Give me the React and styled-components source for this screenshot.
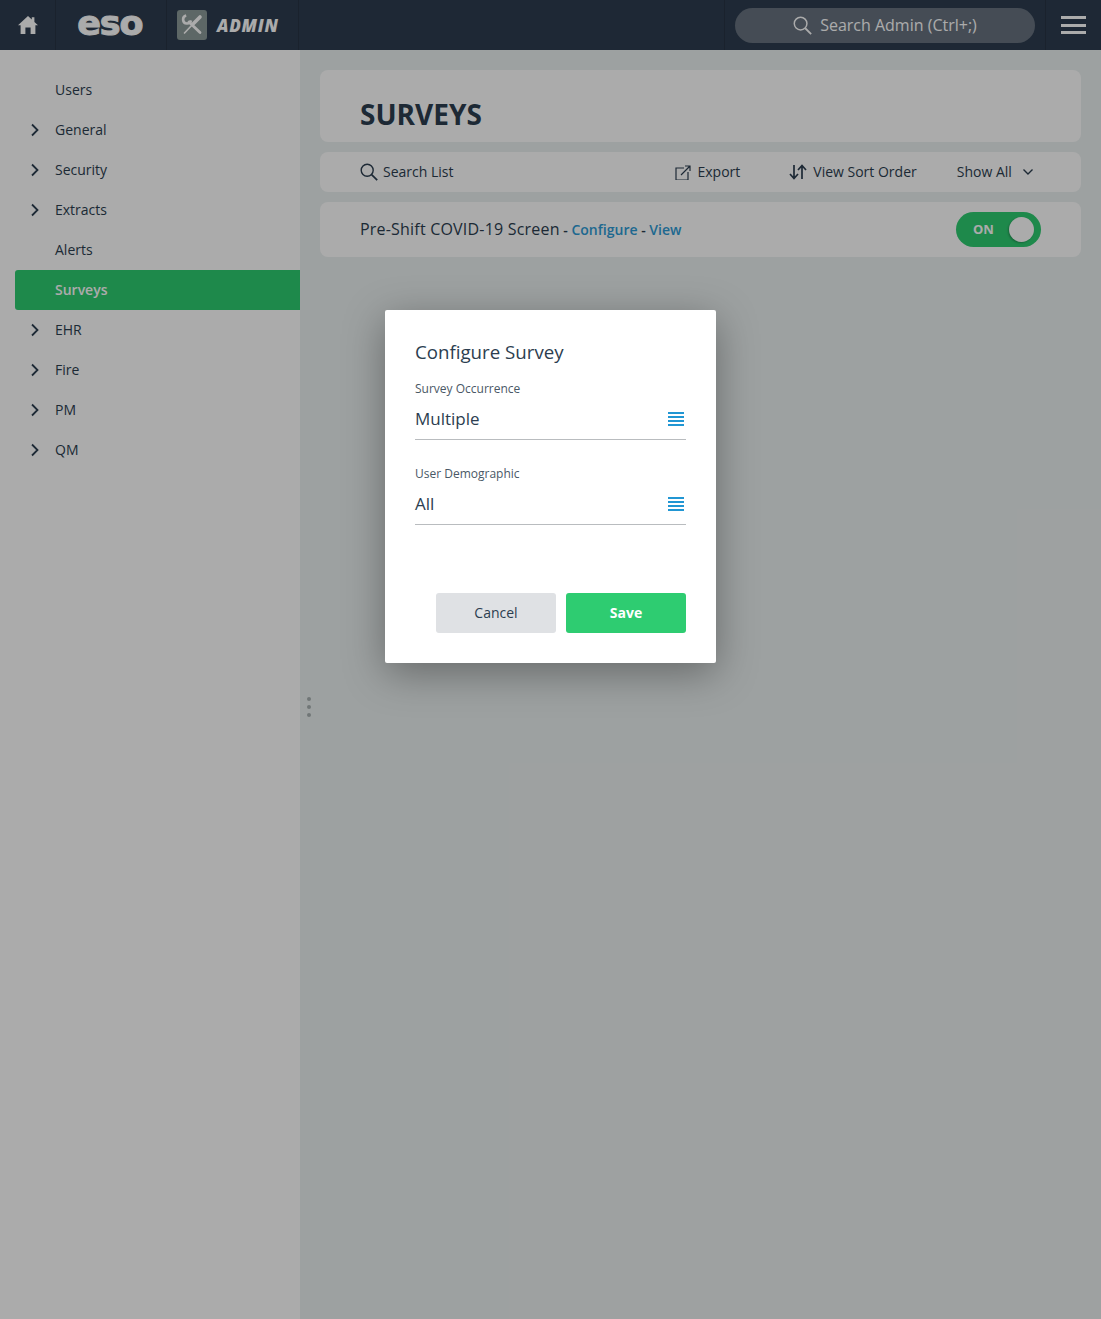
import React from 'react';
import styled, { createGlobalStyle } from 'styled-components';

const GlobalStyle = createGlobalStyle`
  html, body { margin: 0; padding: 0; height: 100%; }
  #root { height: 100%; }
  body { font-family: "Open Sans", "Noto Sans", sans-serif; color: #2c3e50; }
  * { box-sizing: border-box; }
`;

const Page = styled.div`
  position: relative;
  height: 100vh;
  display: flex;
  flex-direction: column;
  background: #ebf0f0;
  overflow: hidden;
`;

const TopBar = styled.header`
  height: 50px;
  flex: none;
  display: flex;
  background: #2e3d50;
`;

const BarCell = styled.div`
  width: ${({ $width }) => $width}px;
  flex: ${({ $grow }) => ($grow ? 1 : 'none')};
  display: flex;
  align-items: center;
  justify-content: ${({ $start }) => ($start ? 'flex-start' : 'center')};
  gap: 10px;
  padding-left: ${({ $start }) => ($start ? '10px' : 0)};
  border-right: ${({ $last }) => ($last ? '0' : '1px solid #273443')};
  color: #fff;
`;

const Logo = styled.span`
  font-family: "DejaVu Sans", sans-serif;
  font-weight: 700;
  font-size: 33px;
  line-height: 1;
  letter-spacing: -1px;
  color: #fff;
  -webkit-text-stroke: 1px #fff;
  margin: -4px 2px 0 0;
  transform: scaleX(1.06);
`;

const ToolTile = styled.span`
  width: 30px;
  height: 30px;
  border-radius: 3px;
  background: #8b9a98;
  display: flex;
  align-items: center;
  justify-content: center;
`;

const AdminLabel = styled.span`
  font-weight: 800;
  font-style: italic;
  font-size: 17px;
  letter-spacing: 0.7px;
  color: #fff;
`;

const SearchPill = styled.div`
  width: 300px;
  height: 35px;
  border-radius: 18px;
  background: #67727f;
  display: flex;
  align-items: center;
  justify-content: center;
  gap: 8px;
  color: #fff;
  font-size: 16px;
`;

const Burger = styled.div`
  width: 25px;
  height: 18px;
  display: flex;
  flex-direction: column;
  justify-content: space-between;
  span { display: block; height: 3px; background: #fff; }
`;

const Body = styled.div`
  flex: 1;
  display: flex;
  min-height: 0;
`;

const Sidebar = styled.nav`
  width: 300px;
  flex: none;
  background: #fff;
  padding: 20px 0 0 15px;
`;

const NavRow = styled.div`
  height: 40px;
  display: flex;
  align-items: center;
  padding-left: ${({ $arrow }) => ($arrow ? '15px' : '40px')};
  padding-bottom: 2px;
  font-size: 14px;
  font-weight: ${({ $active }) => ($active ? 600 : 400)};
  color: ${({ $active }) => ($active ? '#fff' : '#2c3e50')};
  background: ${({ $active }) => ($active ? '#2ecc71' : 'transparent')};
  border-radius: 3px 0 0 3px;
`;

const NavArrow = styled.svg`
  width: 10px;
  height: 14px;
  margin: 2px 15px 0 0;
`;

const Main = styled.main`
  flex: 1;
  padding: 20px;
  display: flex;
  flex-direction: column;
  gap: 10px;
`;

const Card = styled.section`
  background: #fff;
  border-radius: 8px;
  display: flex;
  align-items: center;
  padding: 0 40px;
`;

const TitleCard = styled(Card)`
  height: 72px;
  padding-top: 15px;
`;

const Title = styled.h1`
  margin: 0;
  font-size: 28px;
  font-weight: 700;
  line-height: 1;
  color: #2c3e50;
`;

const ToolbarCard = styled(Card)`
  height: 40px;
  font-size: 14px;
  color: #2c3e50;
`;

const ToolItem = styled.div`
  display: flex;
  align-items: center;
  gap: ${({ $gap }) => $gap || 5}px;
  margin-left: ${({ $left }) => $left || 0}px;
  padding-bottom: 2px;

  svg { margin-top: 2px; }
`;

const ListCard = styled(Card)`
  height: 55px;
  justify-content: space-between;
`;

const RowText = styled.div`
  font-size: 14px;
  font-weight: 600;
  padding-bottom: 2px;
`;

const RowName = styled.span`
  font-size: 16px;
  font-weight: 500;
  letter-spacing: 0.2px;
`;

const RowLink = styled.a`
  color: #2e9bd6;
`;

const Toggle = styled.div`
  width: 85px;
  height: 35px;
  border-radius: 18px;
  background: #2ecc71;
  margin-left: auto;
  position: relative;
  display: flex;
  align-items: center;
  padding: 0 0 2px 17px;
  color: #fff;
  font-size: 13px;
  font-weight: 700;
`;

const Knob = styled.span`
  position: absolute;
  right: 7px;
  top: 5px;
  width: 25px;
  height: 25px;
  border-radius: 50%;
  background: #fff;
  box-shadow: -1px 1px 2px rgba(0, 0, 0, 0.25);
`;

const Splitter = styled.div`
  position: absolute;
  left: 307px;
  top: 697px;
  display: flex;
  flex-direction: column;
  gap: 4px;
  span { width: 4px; height: 4px; border-radius: 50%; background: #a8b1b2; }
`;

const Overlay = styled.div`
  position: absolute;
  inset: 0;
  background: rgba(0, 0, 0, 0.33);
  display: flex;
  justify-content: center;
  align-items: flex-start;
  padding-top: 310px;
`;

const Modal = styled.div`
  width: 331px;
  height: 353px;
  background: #fff;
  border-radius: 2px;
  padding: 30px;
  display: flex;
  flex-direction: column;
  box-shadow: 0 10px 40px rgba(0, 0, 0, 0.35);
`;

const ModalTitle = styled.h2`
  margin: 0 0 16px;
  font-size: 18.7px;
  font-weight: 400;
  line-height: 24px;
  color: #2c3e50;
`;

const Field = styled.div`
  height: 85px;
`;

const FieldLabel = styled.div`
  font-size: 12px;
  line-height: 17px;
  color: #4a5866;
`;

const FieldValue = styled.div`
  margin-top: 6px;
  height: 37px;
  border-bottom: 1px solid #b9bcbf;
  display: flex;
  align-items: center;
  justify-content: space-between;
  padding: 0 2px 5px 0;
  font-size: 17px;
  color: #2c3e50;
`;

const ListIcon = styled.span`
  width: 16px;
  height: 14px;
  display: flex;
  flex-direction: column;
  justify-content: space-between;
  span { display: block; height: 2px; background: #2196d3; }
`;

const Actions = styled.div`
  margin-top: auto;
  display: flex;
  justify-content: flex-end;
  gap: 10px;
`;

const Button = styled.button`
  width: 120px;
  height: 40px;
  border: 0;
  border-radius: 3px;
  padding: 0 0 2px;
  font-family: inherit;
  font-size: 14px;
  font-weight: ${({ $primary }) => ($primary ? 700 : 400)};
  color: ${({ $primary }) => ($primary ? '#fff' : '#2c3e50')};
  background: ${({ $primary }) => ($primary ? '#2ecc71' : '#dfe1e4')};
`;

const SearchGlass = ({ size = 18, color = 'currentColor' }) => (
  <svg width={size} height={size} viewBox="0 0 18 18" fill="none" stroke={color} strokeWidth="1.4">
    <circle cx="7.2" cy="7.2" r="6" />
    <path d="M11.6 11.6 L17.2 17.2" strokeWidth="1.7" />
  </svg>
);

const HomeIcon = () => (
  <svg width="20" height="18" viewBox="0 0 20 18" fill="#fff">
    <path d="M10 0 L13.8 3.5 L13.8 1.2 L16.4 1.2 L16.4 5.9 L20 9.2 L17.4 9.2 L17.4 18 L12.6 18 L12.6 11.5 L7.4 11.5 L7.4 18 L2.6 18 L2.6 9.2 L0 9.2 Z" />
  </svg>
);

const ToolsIcon = () => (
  <svg width="24" height="24" viewBox="0 0 24 24" fill="none" stroke="#fff" strokeLinecap="round">
    <path d="M9 9 L20 19.5" strokeWidth="2.8" />
    <path d="M6.2 2.6 A4 4 0 1 0 11 7.4" strokeWidth="2.6" strokeLinecap="butt" />
    <path d="M20 4 L13.5 10.5" strokeWidth="3.6" />
    <path d="M13.5 10.5 L4.5 20" strokeWidth="1.7" />
  </svg>
);

const ExportIcon = () => (
  <svg width="16" height="16" viewBox="0 -1 16 16" fill="none" stroke="#2c3e50" strokeWidth="1.2">
    <path d="M9 3 H1 V15 H13 V7" />
    <path d="M6 10 L15 1 M10 1 H15 V6" />
  </svg>
);

const SortIcon = () => (
  <svg width="18" height="16" viewBox="0 0 18 16" fill="none" stroke="#2c3e50" strokeWidth="1.7">
    <path d="M5 1 V14.5 M1 10 L5 14.5 L9 10" />
    <path d="M13 15 V1.5 M9 6 L13 1.5 L17 6" />
  </svg>
);

const ChevronDown = () => (
  <svg width="10" height="6" viewBox="0 0 10 6" fill="none" stroke="#2c3e50" strokeWidth="1.4">
    <path d="M0.5 0.5 L5 5 L9.5 0.5" />
  </svg>
);

const navItems = [
  { label: 'Users' },
  { label: 'General', arrow: true },
  { label: 'Security', arrow: true },
  { label: 'Extracts', arrow: true },
  { label: 'Alerts' },
  { label: 'Surveys', active: true },
  { label: 'EHR', arrow: true },
  { label: 'Fire', arrow: true },
  { label: 'PM', arrow: true },
  { label: 'QM', arrow: true },
];

const App = () => (
  <Page>
    <GlobalStyle />
    <TopBar>
      <BarCell $width={56}><HomeIcon /></BarCell>
      <BarCell $width={111}><Logo>eso</Logo></BarCell>
      <BarCell $width={132} $start>
        <ToolTile><ToolsIcon /></ToolTile>
        <AdminLabel>ADMIN</AdminLabel>
      </BarCell>
      <BarCell $grow />
      <BarCell $width={321}>
        <SearchPill><SearchGlass size={19} color="#fff" />Search Admin (Ctrl+;)</SearchPill>
      </BarCell>
      <BarCell $width={55} $last>
        <Burger><span /><span /><span /></Burger>
      </BarCell>
    </TopBar>
    <Body>
      <Sidebar>
        {navItems.map(({ label, arrow, active }) => (
          <NavRow key={label} $arrow={arrow} $active={active}>
            {arrow && (
              <NavArrow viewBox="0 0 10 14" fill="none" stroke="#2c3e50" strokeWidth="1.8">
                <path d="M2 1.5 L7.5 7 L2 12.5" />
              </NavArrow>
            )}
            {label}
          </NavRow>
        ))}
      </Sidebar>
      <Main>
        <TitleCard><Title>SURVEYS</Title></TitleCard>
        <ToolbarCard>
          <ToolItem><SearchGlass />Search List</ToolItem>
          <ToolItem $left={222} $gap={6}><ExportIcon />Export</ToolItem>
          <ToolItem $left={49} $gap={6}><SortIcon />View Sort Order</ToolItem>
          <ToolItem $left={40} $gap={11}>Show All <ChevronDown /></ToolItem>
        </ToolbarCard>
        <ListCard>
          <RowText>
            <RowName>Pre-Shift COVID-19 Screen</RowName> - <RowLink>Configure</RowLink> - <RowLink>View</RowLink>
          </RowText>
          <Toggle>ON<Knob /></Toggle>
        </ListCard>
      </Main>
    </Body>
    <Splitter><span /><span /><span /></Splitter>
    <Overlay>
      <Modal>
        <ModalTitle>Configure Survey</ModalTitle>
        <Field>
          <FieldLabel>Survey Occurrence</FieldLabel>
          <FieldValue>Multiple<ListIcon><span /><span /><span /><span /></ListIcon></FieldValue>
        </Field>
        <Field>
          <FieldLabel>User Demographic</FieldLabel>
          <FieldValue>All<ListIcon><span /><span /><span /><span /></ListIcon></FieldValue>
        </Field>
        <Actions>
          <Button>Cancel</Button>
          <Button $primary>Save</Button>
        </Actions>
      </Modal>
    </Overlay>
  </Page>
);

export default App;
